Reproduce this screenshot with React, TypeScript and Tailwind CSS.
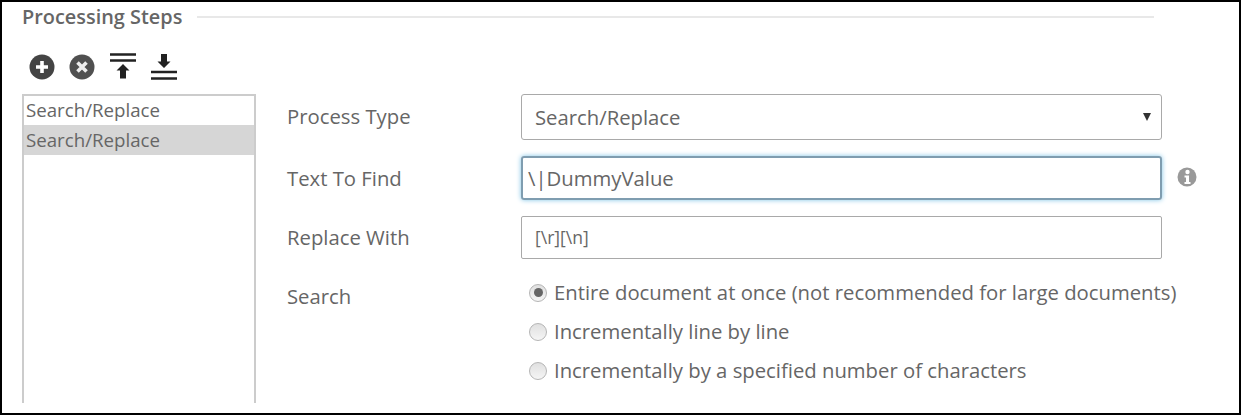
const font = "font-['Open_Sans',sans-serif]";

function ToolbarIcons() {
  return (
    <div className="flex items-center h-[30px] ml-[7px]">
      {/* add */}
      <svg width="26" height="26" viewBox="0 0 26 26">
        <circle cx="13" cy="13" r="12.5" fill="#444" />
        <path d="M13 7v12M7 13h12" stroke="#fff" strokeWidth="3.6" />
      </svg>
      {/* remove */}
      <svg width="26" height="26" viewBox="0 0 26 26" className="ml-[14px]">
        <circle cx="13" cy="13" r="12.5" fill="#505050" />
        <path d="M8.5 8.5l9 9M17.5 8.5l-9 9" stroke="#eee" strokeWidth="3.6" />
      </svg>
      {/* move to top */}
      <svg width="26" height="26" viewBox="0 0 26 26" className="ml-[15px] -mt-[2px]">
        <path d="M0 1.5h26M0 7.5h26" stroke="#222" strokeWidth="2.4" />
        <path d="M13 11l6.5 6.5H16V25.5h-6v-8H6.5z" fill="#222" />
      </svg>
      {/* move to bottom */}
      <svg width="26" height="26" viewBox="0 0 26 26" className="ml-[15px] -mt-[1px]">
        <path d="M10 0h6v7.5h3.5L13 14 6.5 7.5H10z" fill="#222" />
        <path d="M0 18h26M0 24.5h26" stroke="#222" strokeWidth="2.4" />
      </svg>
    </div>
  );
}

function Radio({ checked, label }: { checked?: boolean; label: string }) {
  return (
    <div className="flex items-center h-[39px]">
      <span className="flex items-center justify-center w-[18px] h-[18px] rounded-full border border-[#b5b5b5] bg-gradient-to-b from-[#e0e0e0] to-[#f5f5f5] mr-[7px]">
        {checked && <span className="w-[9px] h-[9px] rounded-full bg-[#666]" />}
      </span>
      <span>{label}</span>
    </div>
  );
}

export default function App() {
  return (
    <div className={`w-[1241px] h-[415px] bg-white border-2 border-black overflow-hidden text-[20.3px] text-[#666] ${font}`}>
      <div className="flex items-center pl-[20px] h-[30px] w-[1152px]">
        <span className="text-[19.9px] font-semibold text-[#666] leading-none">Processing Steps</span>
        <div className="flex-1 h-[2px] bg-[#e8e8e8] ml-[15px]" />
      </div>
      <div className="pl-[20px] pt-[20px]">
        <ToolbarIcons />
      </div>
      <div className="flex pl-[20px] mt-[-3px]">
        <div className="w-[234px] h-[309px] border-x-2 border-t-2 border-[#ccc] shrink-0 mt-[15px] text-[18.7px]">
          <div className="h-[29px] flex items-center pl-[2px]">Search/Replace</div>
          <div className="h-[30px] flex items-center pl-[2px] bg-[#d6d6d6]">Search/Replace</div>
        </div>
        <div className="flex-1 pl-[31px] pt-[15px]">
          <div className="flex items-center h-[46px]">
            <label className="w-[234px] shrink-0 -mt-[2px]">Process Type</label>
            <div className="w-[641px] h-[46px] border border-[#a9a9a9] rounded-[3px] flex items-center justify-between pl-[13px] pr-[10px]">
              <span>Search/Replace</span>
              <span className="w-0 h-0 border-x-[4px] border-x-transparent border-t-[8px] border-t-[#333]" />
            </div>
          </div>
          <div className="flex items-center h-[44px] mt-[16px]">
            <label className="w-[234px] shrink-0">Text To Find</label>
            <div className="w-[641px] h-[44px] border-2 border-[#7f9db0] rounded-[3px] shadow-[0_0_5px_#7ec3e6] flex items-center pl-[5px]">
              <span className="whitespace-pre">\|DummyValue</span>
            </div>
            <svg width="20" height="20" viewBox="0 0 20 20" className="ml-[15px] -mt-[2px]">
              <circle cx="10" cy="10" r="9.5" fill="#999" />
              <circle cx="10.5" cy="5" r="2.2" fill="#fff" />
              <path d="M7.5 8.5h4.5v6.5h1.5v2h-6v-2H9v-4.5H7.5z" fill="#fff" />
            </svg>
          </div>
          <div className="flex items-center h-[43px] mt-[16px]">
            <label className="w-[234px] shrink-0">Replace With</label>
            <div className="w-[641px] h-[43px] border border-[#a9a9a9] rounded-[2px] flex items-center pl-[13px] text-[17.5px]">
              [\r][\n]
            </div>
          </div>
          <div className="flex mt-[14px]">
            <label className="w-[234px] shrink-0 pt-[8px]">Search</label>
            <div className="pl-[8px]">
              <Radio checked label="Entire document at once (not recommended for large documents)" />
              <Radio label="Incrementally line by line" />
              <Radio label="Incrementally by a specified number of characters" />
            </div>
          </div>
        </div>
      </div>
    </div>
  );
}
